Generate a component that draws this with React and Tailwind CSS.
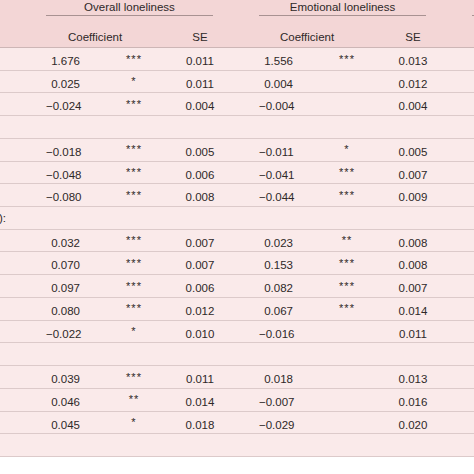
import React from "react";

const COLS = "grid grid-cols-[46px_54px_68px_64px_27px_54px_68px_64px_27px_60px]";

const rows = [
  ["1.676", "***", "0.011", "1.556", "***", "0.013"],
  ["0.025", "*", "0.011", "0.004", "", "0.012"],
  ["−0.024", "***", "0.004", "−0.004", "", "0.004"],
  null,
  ["−0.018", "***", "0.005", "−0.011", "*", "0.005"],
  ["−0.048", "***", "0.006", "−0.041", "***", "0.007"],
  ["−0.080", "***", "0.008", "−0.044", "***", "0.009"],
  "label",
  ["0.032", "***", "0.007", "0.023", "**", "0.008"],
  ["0.070", "***", "0.007", "0.153", "***", "0.008"],
  ["0.097", "***", "0.006", "0.082", "***", "0.007"],
  ["0.080", "***", "0.012", "0.067", "***", "0.014"],
  ["−0.022", "*", "0.010", "−0.016", "", "0.011"],
  null,
  ["0.039", "***", "0.011", "0.018", "", "0.013"],
  ["0.046", "**", "0.014", "−0.007", "", "0.016"],
  ["0.045", "*", "0.018", "−0.029", "", "0.020"],
  null,
];

function Stars({ s }) {
  return (
    <span className="relative top-[0px] text-[11px] tracking-[1px] leading-none">{s}</span>
  );
}

function Row({ r }) {
  const base = "h-[22.72px] border-b border-[#dccaca] items-center";
  if (r === null) return <div className={`${COLS} ${base}`} />;
  if (r === "label")
    return (
      <div className={`${COLS} ${base}`}>
        <div className="-ml-[1px] whitespace-nowrap pt-[2px]">):</div>
      </div>
    );
  return (
    <div className={`${COLS} ${base}`}>
      <div />
      <div className="text-right pr-[20px] pt-[5px]">{r[0]}</div>
      <div className="text-center"><Stars s={r[1]} /></div>
      <div className="text-center pt-[5px]">{r[2]}</div>
      <div />
      <div className="text-right pr-[20px] pt-[5px]">{r[3]}</div>
      <div className="text-center"><Stars s={r[4]} /></div>
      <div className="text-center pt-[5px]">{r[5]}</div>
      <div />
      <div />
    </div>
  );
}

export default function App() {
  return (
    <div
      className="w-[474px] h-[474px] overflow-hidden bg-white text-[#2e2828] text-[11.5px]"
      style={{ fontFamily: '"Liberation Sans", Arial, sans-serif' }}
    >
      <div className="bg-[#f3d6d6] h-[48px] border-b border-[#cdb6b6]">
        <div className={`${COLS} h-[16px]`}>
          <div />
          <div className="col-span-3 mr-[19px] border-b border-[#a89292] text-center leading-[12px] pt-[1px] h-[16px]">
            Overall loneliness
          </div>
          <div />
          <div className="col-span-3 mr-[19px] border-b border-[#a89292] text-center leading-[12px] pt-[1px] h-[16px]">
            Emotional loneliness
          </div>
          <div />
          <div className="border-b border-[#a89292] h-[16px]" />
        </div>
        <div className={`${COLS} h-[31px] items-center pt-[12px]`}>
          <div />
          <div className="col-span-2 pl-[22px]">Coefficient</div>
          <div className="text-center">SE</div>
          <div />
          <div className="col-span-2 pl-[21px]">Coefficient</div>
          <div className="text-center">SE</div>
          <div />
          <div />
        </div>
      </div>
      <div className="bg-[#faeaea]">
        {rows.map((r, i) => (
          <Row key={i} r={r} />
        ))}
      </div>
    </div>
  );
}
